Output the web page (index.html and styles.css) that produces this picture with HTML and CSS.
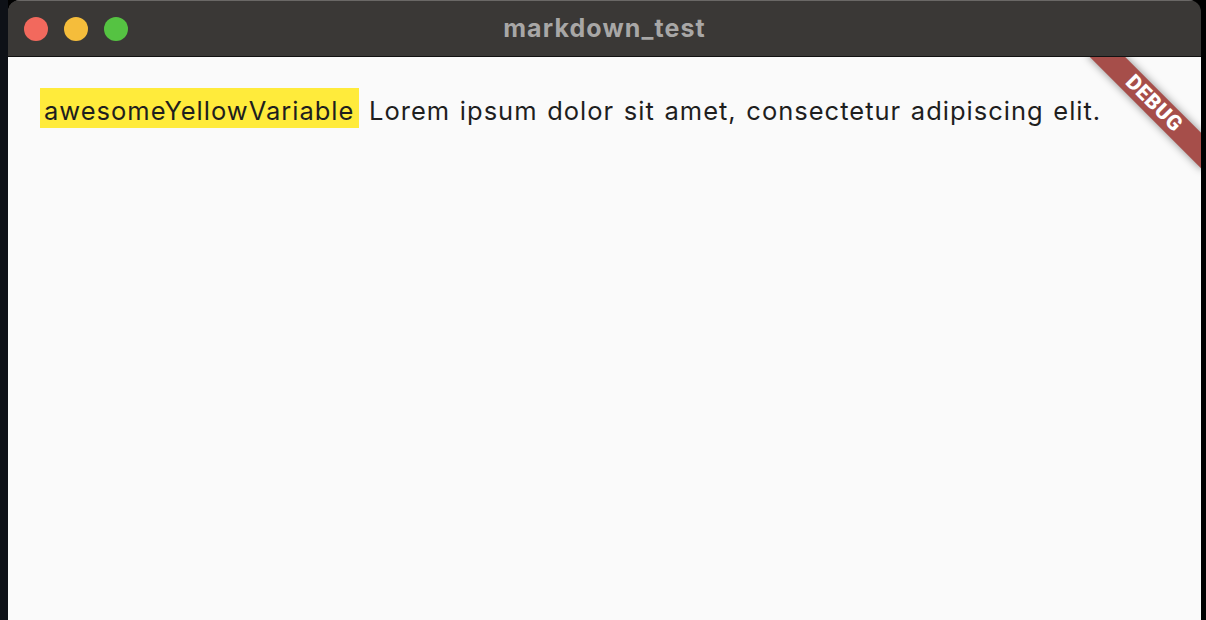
FILE: index.html
```html
<!DOCTYPE html>
<html>
<head>
<meta charset="utf-8">
<link rel="stylesheet" href="styles.css">
</head>
<body>
<div class="desk">
  <div class="left-strip"></div>
  <div class="window">
    <div class="titlebar">
      <div class="lights">
        <span class="light red"></span>
        <span class="light yellow"></span>
        <span class="light green"></span>
      </div>
      <div class="title">markdown_test</div>
    </div>
    <div class="content">
      <p class="line"><span class="code">awesomeYellowVariable</span> Lorem ipsum dolor sit amet, consectetur adipiscing elit.</p>
      <div class="banner"><span>DEBUG</span></div>
    </div>
  </div>
  <div class="right-strip"></div>
</div>
</body>
</html>
```

FILE: styles.css
```css
html, body {
  margin: 0;
  padding: 0;
  background: #000;
  overflow: hidden;
}
.desk {
  display: flex;
  width: 1206px;
  height: 620px;
}
.left-strip {
  width: 8px;
  background: #0e1117;
  flex: none;
}
.right-strip {
  flex: 1;
  background: #000;
}
.window {
  width: 1193px;
  flex: none;
  height: 640px;
  display: flex;
  flex-direction: column;
  border-radius: 12px 12px 0 0;
  overflow: hidden;
  box-shadow: inset 1px 0 0 #555;
}
.titlebar {
  height: 57px;
  flex: none;
  background: #3a3836;
  border-top: 1px solid #6a6866;
  box-sizing: border-box;
  border-bottom: 1px solid #121212;
  display: flex;
  align-items: center;
  position: relative;
}
.lights {
  display: flex;
  gap: 16px;
  padding-left: 16px;
  margin-top: 1px;
}
.light {
  width: 24px;
  height: 24px;
  border-radius: 50%;
  display: block;
}
.red { background: #f2695d; }
.yellow { background: #f5bd3b; }
.green { background: #55c342; }
.title {
  position: absolute;
  left: 0;
  right: 0;
  top: 0;
  bottom: 0;
  display: flex;
  align-items: center;
  justify-content: center;
  font-family: Inter, "Liberation Sans", sans-serif;
  font-weight: 700;
  font-size: 25px;
  letter-spacing: 1.1px;
  color: #a8a7a6;
  padding-bottom: 2px;
  box-sizing: border-box;
}
.content {
  flex: 1;
  background: #fafafa;
  position: relative;
  overflow: hidden;
  padding: 31px 0 0 32px;
}
.line {
  margin: 0;
  font-family: Inter, "Liberation Sans", sans-serif;
  font-size: 25.5px;
  line-height: 35px;
  letter-spacing: 1px;
  word-spacing: 1.5px;
  color: #1e1e1e;
}
.code {
  display: inline-block;
  background: #ffeb3b;
  height: 40px;
  box-sizing: border-box;
  line-height: 35px;
  padding: 5px 5px 0 4px;
  word-spacing: 0;
}
.banner {
  position: absolute;
  top: 34px;
  right: -34px;
  width: 162px;
  height: 25px;
  background: #a64e4a;
  transform: rotate(45deg);
  box-shadow: 0 0 8px rgba(0, 0, 0, 0.45);
  display: flex;
  align-items: center;
  justify-content: center;
}
.banner span {
  font-family: Roboto, "Liberation Sans", sans-serif;
  font-weight: 900;
  font-size: 21px;
  line-height: 1;
  color: #fff;
  letter-spacing: 0.6px;
}
```
